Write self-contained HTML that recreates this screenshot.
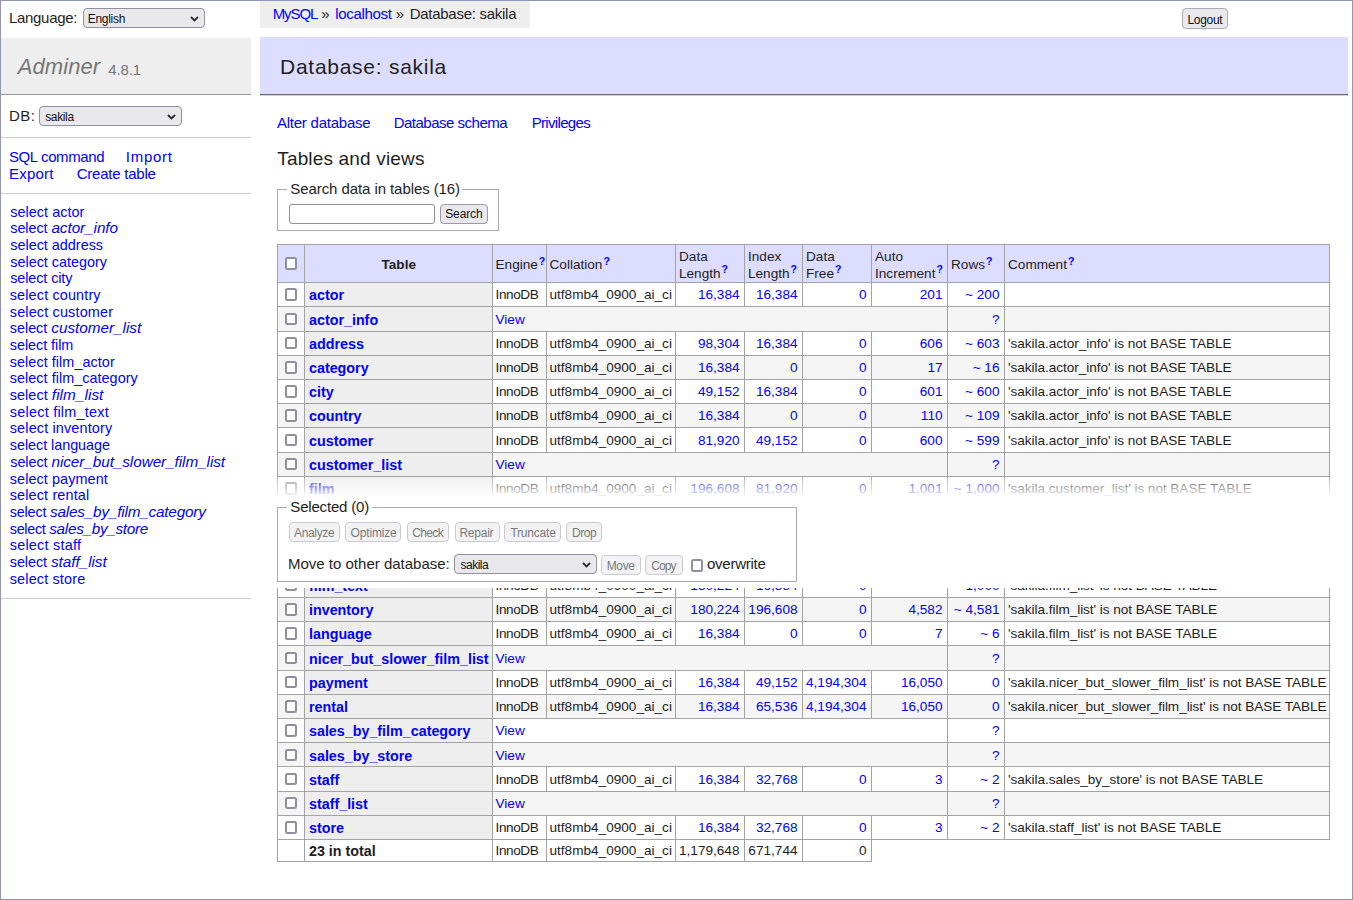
<!DOCTYPE html>
<html><head><meta charset="utf-8"><title>Database: sakila - Adminer</title>
<style>
html,body{margin:0;padding:0;background:#fff}
body{width:1353px;height:900px;overflow:hidden;position:relative;font-family:"Liberation Sans",sans-serif;color:#1e1e1e;font-size:15px;line-height:18px}
a{color:#00f;text-decoration:none}
.abs{position:absolute;white-space:nowrap}
.frame{position:absolute;left:0;top:0;width:1351px;height:898px;border:1px solid #9196b0;z-index:50;pointer-events:none}
.sel{position:absolute;box-sizing:border-box;background:#e9e9ed;border:1px solid #8f8f9d;border-radius:4px;font-size:12px;line-height:21px;color:#111;padding-left:7px}
.sel svg{position:absolute;right:5.5px;top:7px}
.btn{position:absolute;box-sizing:border-box;background:#e9e9ed;border:1px solid #9a9aa6;border-radius:4px;font-size:12px;line-height:19px;color:#111;text-align:center}
.btn.dis{color:#7a7a7a;background:#f3f3f5;border-color:#cacad2;font-size:12px;line-height:21px}
.cb{display:inline-block;box-sizing:border-box;width:12.5px;height:12.5px;border:2px solid #8f8f9d;border-radius:2.5px;background:#fff;vertical-align:middle;position:relative;top:-0.5px}
/* menu */
#h1{position:absolute;left:1px;top:38px;width:250px;height:55.5px;background:#eee;border-bottom:1px solid #999}
.hr{position:absolute;left:1px;width:250px;height:1px;background:#ccc}
#ver{font-size:15px;font-style:normal;vertical-align:-1px}
.li i{font-size:15.3px}
.li{font-size:14.4px;height:16.7px;line-height:16.7px;white-space:nowrap}
/* content */
#bc{position:absolute;left:260px;top:1px;width:270px;height:27px;background:#eee}
#h2{position:absolute;left:260px;top:37px;width:1088px;height:56.5px;background:#ddf;border-bottom:1px solid #6f6f78;box-shadow:0 1px 0 rgba(0,0,0,.18)}
/* table */
#tbl{position:absolute;left:277px;top:243.5px;border-collapse:collapse;table-layout:fixed;width:1053px;font-size:13.6px;line-height:16px}
#tbl td,#tbl th{border:1px solid #a3a3a3;padding:0 3px;white-space:nowrap;overflow:hidden;vertical-align:middle}
#tbl th{background:#eee;text-align:left;font-weight:bold;font-size:14.3px;padding-left:4px}
#tbl thead td,#tbl thead th{background:#ddf;font-weight:normal;line-height:17px;padding-top:3px}
#tbl thead th{text-align:center;font-weight:bold;font-size:13.6px}
#tbl tbody tr{height:24.23px}
#tbl tbody td,#tbl tbody th{padding-top:1.4px}
#tbl tr.odd td{background:#f5f5f5}
#tbl td.r{text-align:right;padding-right:4.5px}
#tbl td.e{letter-spacing:-0.4px}
#tbl td.cm{overflow:visible;letter-spacing:-0.05px}
#tbl td.c0{text-align:center;padding:0}
#tbl sup{color:#00f;font-size:10.5px;font-weight:bold;line-height:0;vertical-align:4.5px;margin-left:1px}
#tbl tr.tot td,#tbl tr.tot th{background:#fff}
#tbl tr.tot{height:21.9px}
/* footer */
#foot{position:absolute;left:261px;top:477.5px;width:1092px;height:110.5px;z-index:10}
#foot .grad{height:20px;background:linear-gradient(rgba(255,255,255,.2),#fff)}
#foot .wh{height:90.5px;background:#fff}
</style></head><body>
<div class="frame"></div>

<!-- left menu -->
<div class="abs" style="left:10px;top:9px"><span id="lang" style="letter-spacing:-0.312px;margin-left:-1.00px">Language:</span></div>
<div class="sel" style="left:83px;top:8px;width:122px;height:20px"><span id="langsel" style="letter-spacing:-0.267px;margin-left:-3.36px">English</span><svg width="9" height="6" viewBox="0 0 9 6"><path d="M1 1 L4.5 4.5 L8 1" fill="none" stroke="#2b2b2b" stroke-width="1.8"/></svg></div>

<div id="h1"></div>
<div class="abs" style="left:16px;top:53.8px;font-size:22px;line-height:26px;color:#777;font-style:italic"><span id="adm" style="letter-spacing:0.083px;margin-left:1.74px">Adminer</span> <span id="ver" style="letter-spacing:-0.125px;margin-left:1.84px">4.8.1</span></div>

<div class="abs" style="left:10px;top:107px"><span id="db" style="letter-spacing:0.500px;margin-left:-1.00px">DB:</span></div>
<div class="sel" style="left:39px;top:106px;width:143px;height:20px"><span id="dbsel" style="letter-spacing:-0.360px;margin-left:-1.80px">sakila</span><svg width="9" height="6" viewBox="0 0 9 6"><path d="M1 1 L4.5 4.5 L8 1" fill="none" stroke="#2b2b2b" stroke-width="1.8"/></svg></div>
<div class="hr" style="top:137px"></div>

<div class="abs" style="left:10px;top:148px"><a id="sql" style="letter-spacing:-0.400px;margin-left:-1.00px">SQL command</a></div>
<div class="abs" style="left:127px;top:148px"><a id="imp" style="letter-spacing:0.700px;margin-left:-1.18px">Import</a></div>
<div class="abs" style="left:10px;top:164.5px"><a id="exp" style="letter-spacing:0.200px;margin-left:-1.00px">Export</a></div>
<div class="abs" style="left:77px;top:164.5px"><a id="crt" style="letter-spacing:-0.227px;margin-left:-0.34px">Create table</a></div>
<div class="hr" style="top:193px"></div>

<div class="abs" style="left:10px;top:203.5px;color:#00f">
<div class="li"><span id="m0" style="letter-spacing:0.045px;margin-left:0.26px">select actor</span></div>
<div class="li"><span id="m1" style="letter-spacing:-0.062px;margin-left:0.26px">select <i>actor_info</i></span></div>
<div class="li"><span id="m2" style="letter-spacing:0.000px;margin-left:0.26px">select address</span></div>
<div class="li"><span id="m3" style="letter-spacing:0.000px;margin-left:0.26px">select category</span></div>
<div class="li"><span id="m4" style="letter-spacing:-0.100px;margin-left:0.26px">select city</span></div>
<div class="li"><span id="m5" style="letter-spacing:0.154px;margin-left:-0.24px">select country</span></div>
<div class="li"><span id="m6" style="letter-spacing:0.171px;margin-left:-0.24px">select customer</span></div>
<div class="li"><span id="m7" style="letter-spacing:-0.011px;margin-left:-0.24px">select <i>customer_list</i></span></div>
<div class="li"><span id="m8" style="letter-spacing:-0.040px;margin-left:-0.24px">select film</span></div>
<div class="li"><span id="m9" style="letter-spacing:0.062px;margin-left:-0.24px">select film_actor</span></div>
<div class="li"><span id="m10" style="letter-spacing:0.042px;margin-left:-0.24px">select film_category</span></div>
<div class="li"><span id="m11" style="letter-spacing:0.067px;margin-left:-0.24px">select <i>film_list</i></span></div>
<div class="li"><span id="m12" style="letter-spacing:0.253px;margin-left:-0.24px">select film_text</span></div>
<div class="li"><span id="m13" style="letter-spacing:0.160px;margin-left:-0.24px">select inventory</span></div>
<div class="li"><span id="m14" style="letter-spacing:-0.043px;margin-left:-0.24px">select language</span></div>
<div class="li"><span id="m15" style="letter-spacing:-0.059px;margin-left:0.26px">select <i>nicer_but_slower_film_list</i></span></div>
<div class="li"><span id="m16" style="letter-spacing:0.092px;margin-left:-0.24px">select payment</span></div>
<div class="li"><span id="m17" style="letter-spacing:0.150px;margin-left:-0.24px">select rental</span></div>
<div class="li"><span id="m18" style="letter-spacing:-0.193px;margin-left:-0.24px">select <i>sales_by_film_category</i></span></div>
<div class="li"><span id="m19" style="letter-spacing:-0.300px;margin-left:-0.24px">select <i>sales_by_store</i></span></div>
<div class="li"><span id="m20" style="letter-spacing:0.236px;margin-left:-0.24px">select staff</span></div>
<div class="li"><span id="m21" style="letter-spacing:-0.050px;margin-left:-0.24px">select <i>staff_list</i></span></div>
<div class="li"><span id="m22" style="letter-spacing:0.164px;margin-left:-0.24px">select store</span></div>
</div>
<div class="hr" style="top:598px"></div>

<!-- breadcrumb -->
<div id="bc"></div>
<div class="abs" style="left:274px;top:5px"><a id="bc1" style="letter-spacing:-1.125px;margin-left:-1.26px">MySQL</a> &raquo; <a id="bc2" style="letter-spacing:-0.312px;margin-left:1.34px">localhost</a> &raquo; <span id="bc3" style="letter-spacing:-0.267px;margin-left:1.40px">Database: sakila</span></div>
<div class="btn" style="left:1181.5px;top:7.5px;width:46px;height:21px;line-height:22px;border-color:#acacb6"><span id="logout" style="letter-spacing:-0.280px;margin-left:0.84px">Logout</span></div>

<div id="h2"></div>
<div class="abs" style="left:281px;top:54px;font-size:21px;line-height:26px"><span id="h2t" style="letter-spacing:0.733px;margin-left:-1.00px">Database: sakila</span></div>

<div class="abs" style="left:277px;top:114px"><a id="l1" style="letter-spacing:-0.231px;margin-left:-0.08px">Alter database</a></div>
<div class="abs" style="left:394px;top:114px"><a id="l2" style="letter-spacing:-0.500px;margin-left:-0.34px">Database schema</a></div>
<div class="abs" style="left:532px;top:114px"><a id="l3" style="letter-spacing:-0.667px;margin-left:-0.34px">Privileges</a></div>

<div class="abs" style="left:277px;top:148px;font-size:19px;line-height:22px"><span id="h3t" style="letter-spacing:0.167px;margin-left:0.24px">Tables and views</span></div>

<!-- search fieldset -->
<div class="abs" style="left:277px;top:189px;width:220px;height:41px;border:1px solid #ababab;border-top:none"></div>
<div class="abs" style="left:277px;top:189px;width:10px;height:1px;background:#ababab"></div>
<div class="abs" style="left:462px;top:189px;width:36px;height:1px;background:#ababab"></div>
<div class="abs" style="left:290px;top:180px"><span id="leg1" style="letter-spacing:-0.080px;margin-left:0.34px">Search data in tables (16)</span></div>
<div class="abs" style="left:289px;top:204px;width:146px;height:20px;box-sizing:border-box;border:1px solid #8f8f9d;border-radius:3px;background:#fff"></div>
<div class="btn" style="left:440px;top:204px;width:48px;height:20px"><span id="srch" style="letter-spacing:-0.120px;margin-left:-0.24px">Search</span></div>

<table id="tbl">
<colgroup><col style="width:27px"><col style="width:187.5px"><col style="width:54px"><col style="width:129.5px"><col style="width:69px"><col style="width:58px"><col style="width:69px"><col style="width:76px"><col style="width:57px"><col style="width:325px"></colgroup>
<thead><tr style="height:38.6px"><td class="c0"><span class="cb"></span></td><th>Table</th><td>Engine<sup>?</sup></td><td>Collation<sup>?</sup></td><td>Data<br>Length<sup>?</sup></td><td>Index<br>Length<sup>?</sup></td><td>Data<br>Free<sup>?</sup></td><td>Auto<br>Increment<sup>?</sup></td><td>Rows<sup>?</sup></td><td>Comment<sup>?</sup></td></tr></thead>
<tbody>
<tr><td class="c0"><span class="cb"></span></td><th><a>actor</a></th><td class="e">InnoDB</td><td>utf8mb4_0900_ai_ci</td><td class="r"><a>16,384</a></td><td class="r"><a>16,384</a></td><td class="r"><a>0</a></td><td class="r"><a>201</a></td><td class="r"><a>~ 200</a></td><td class="cm"></td></tr>
<tr class="odd"><td class="c0"><span class="cb"></span></td><th><a>actor_info</a></th><td colspan="6"><a class="v">View</a></td><td class="r"><a>?</a></td><td></td></tr>
<tr><td class="c0"><span class="cb"></span></td><th><a>address</a></th><td class="e">InnoDB</td><td>utf8mb4_0900_ai_ci</td><td class="r"><a>98,304</a></td><td class="r"><a>16,384</a></td><td class="r"><a>0</a></td><td class="r"><a>606</a></td><td class="r"><a>~ 603</a></td><td class="cm">'sakila.actor_info' is not BASE TABLE</td></tr>
<tr class="odd"><td class="c0"><span class="cb"></span></td><th><a>category</a></th><td class="e">InnoDB</td><td>utf8mb4_0900_ai_ci</td><td class="r"><a>16,384</a></td><td class="r"><a>0</a></td><td class="r"><a>0</a></td><td class="r"><a>17</a></td><td class="r"><a>~ 16</a></td><td class="cm">'sakila.actor_info' is not BASE TABLE</td></tr>
<tr><td class="c0"><span class="cb"></span></td><th><a>city</a></th><td class="e">InnoDB</td><td>utf8mb4_0900_ai_ci</td><td class="r"><a>49,152</a></td><td class="r"><a>16,384</a></td><td class="r"><a>0</a></td><td class="r"><a>601</a></td><td class="r"><a>~ 600</a></td><td class="cm">'sakila.actor_info' is not BASE TABLE</td></tr>
<tr class="odd"><td class="c0"><span class="cb"></span></td><th><a>country</a></th><td class="e">InnoDB</td><td>utf8mb4_0900_ai_ci</td><td class="r"><a>16,384</a></td><td class="r"><a>0</a></td><td class="r"><a>0</a></td><td class="r"><a>110</a></td><td class="r"><a>~ 109</a></td><td class="cm">'sakila.actor_info' is not BASE TABLE</td></tr>
<tr><td class="c0"><span class="cb"></span></td><th><a>customer</a></th><td class="e">InnoDB</td><td>utf8mb4_0900_ai_ci</td><td class="r"><a>81,920</a></td><td class="r"><a>49,152</a></td><td class="r"><a>0</a></td><td class="r"><a>600</a></td><td class="r"><a>~ 599</a></td><td class="cm">'sakila.actor_info' is not BASE TABLE</td></tr>
<tr class="odd"><td class="c0"><span class="cb"></span></td><th><a>customer_list</a></th><td colspan="6"><a class="v">View</a></td><td class="r"><a>?</a></td><td></td></tr>
<tr><td class="c0"><span class="cb"></span></td><th><a>film</a></th><td class="e">InnoDB</td><td>utf8mb4_0900_ai_ci</td><td class="r"><a>196,608</a></td><td class="r"><a>81,920</a></td><td class="r"><a>0</a></td><td class="r"><a>1,001</a></td><td class="r"><a>~ 1,000</a></td><td class="cm">'sakila.customer_list' is not BASE TABLE</td></tr>
<tr class="odd"><td class="c0"><span class="cb"></span></td><th><a>film_actor</a></th><td class="e">InnoDB</td><td>utf8mb4_0900_ai_ci</td><td class="r"><a>196,608</a></td><td class="r"><a>81,920</a></td><td class="r"><a>0</a></td><td class="r"></td><td class="r"><a>~ 5,462</a></td><td class="cm">'sakila.customer_list' is not BASE TABLE</td></tr>
<tr><td class="c0"><span class="cb"></span></td><th><a>film_category</a></th><td class="e">InnoDB</td><td>utf8mb4_0900_ai_ci</td><td class="r"><a>65,536</a></td><td class="r"><a>16,384</a></td><td class="r"><a>0</a></td><td class="r"></td><td class="r"><a>~ 1,000</a></td><td class="cm">'sakila.customer_list' is not BASE TABLE</td></tr>
<tr class="odd"><td class="c0"><span class="cb"></span></td><th><a>film_list</a></th><td colspan="6"><a class="v">View</a></td><td class="r"><a>?</a></td><td></td></tr>
<tr><td class="c0"><span class="cb"></span></td><th><a>film_text</a></th><td class="e">InnoDB</td><td>utf8mb4_0900_ai_ci</td><td class="r"><a>180,224</a></td><td class="r"><a>16,384</a></td><td class="r"><a>0</a></td><td class="r"></td><td class="r"><a>~ 1,000</a></td><td class="cm">'sakila.film_list' is not BASE TABLE</td></tr>
<tr class="odd"><td class="c0"><span class="cb"></span></td><th><a>inventory</a></th><td class="e">InnoDB</td><td>utf8mb4_0900_ai_ci</td><td class="r"><a>180,224</a></td><td class="r"><a>196,608</a></td><td class="r"><a>0</a></td><td class="r"><a>4,582</a></td><td class="r"><a>~ 4,581</a></td><td class="cm">'sakila.film_list' is not BASE TABLE</td></tr>
<tr><td class="c0"><span class="cb"></span></td><th><a>language</a></th><td class="e">InnoDB</td><td>utf8mb4_0900_ai_ci</td><td class="r"><a>16,384</a></td><td class="r"><a>0</a></td><td class="r"><a>0</a></td><td class="r"><a>7</a></td><td class="r"><a>~ 6</a></td><td class="cm">'sakila.film_list' is not BASE TABLE</td></tr>
<tr class="odd"><td class="c0"><span class="cb"></span></td><th><a>nicer_but_slower_film_list</a></th><td colspan="6"><a class="v">View</a></td><td class="r"><a>?</a></td><td></td></tr>
<tr><td class="c0"><span class="cb"></span></td><th><a>payment</a></th><td class="e">InnoDB</td><td>utf8mb4_0900_ai_ci</td><td class="r"><a>16,384</a></td><td class="r"><a>49,152</a></td><td class="r"><a>4,194,304</a></td><td class="r"><a>16,050</a></td><td class="r"><a>0</a></td><td class="cm">'sakila.nicer_but_slower_film_list' is not BASE TABLE</td></tr>
<tr class="odd"><td class="c0"><span class="cb"></span></td><th><a>rental</a></th><td class="e">InnoDB</td><td>utf8mb4_0900_ai_ci</td><td class="r"><a>16,384</a></td><td class="r"><a>65,536</a></td><td class="r"><a>4,194,304</a></td><td class="r"><a>16,050</a></td><td class="r"><a>0</a></td><td class="cm">'sakila.nicer_but_slower_film_list' is not BASE TABLE</td></tr>
<tr><td class="c0"><span class="cb"></span></td><th><a>sales_by_film_category</a></th><td colspan="6"><a class="v">View</a></td><td class="r"><a>?</a></td><td></td></tr>
<tr class="odd"><td class="c0"><span class="cb"></span></td><th><a>sales_by_store</a></th><td colspan="6"><a class="v">View</a></td><td class="r"><a>?</a></td><td></td></tr>
<tr><td class="c0"><span class="cb"></span></td><th><a>staff</a></th><td class="e">InnoDB</td><td>utf8mb4_0900_ai_ci</td><td class="r"><a>16,384</a></td><td class="r"><a>32,768</a></td><td class="r"><a>0</a></td><td class="r"><a>3</a></td><td class="r"><a>~ 2</a></td><td class="cm">'sakila.sales_by_store' is not BASE TABLE</td></tr>
<tr class="odd"><td class="c0"><span class="cb"></span></td><th><a>staff_list</a></th><td colspan="6"><a class="v">View</a></td><td class="r"><a>?</a></td><td></td></tr>
<tr><td class="c0"><span class="cb"></span></td><th><a>store</a></th><td class="e">InnoDB</td><td>utf8mb4_0900_ai_ci</td><td class="r"><a>16,384</a></td><td class="r"><a>32,768</a></td><td class="r"><a>0</a></td><td class="r"><a>3</a></td><td class="r"><a>~ 2</a></td><td class="cm">'sakila.staff_list' is not BASE TABLE</td></tr>
<tr class="tot"><td></td><th>23 in total</th><td class="e">InnoDB</td><td>utf8mb4_0900_ai_ci</td><td class="r">1,179,648</td><td class="r">671,744</td><td class="r">0</td></tr>
</tbody>
</table>

<!-- sticky footer -->
<div id="foot"><div class="grad"></div><div class="wh"></div></div>
<div class="abs" style="z-index:11;left:277px;top:507px;width:518px;height:74px;border:1px solid #ababab;border-top:none"></div>
<div class="abs" style="z-index:11;left:277px;top:507px;width:10px;height:1px;background:#ababab"></div>
<div class="abs" style="z-index:11;left:372px;top:507px;width:424px;height:1px;background:#ababab"></div>
<div class="abs" style="z-index:11;left:290px;top:498px"><span id="leg2" style="letter-spacing:-0.182px;margin-left:0.34px">Selected (0)</span></div>
<div class="btn dis" style="z-index:11;left:289px;top:522px;width:51px;height:20px"><span id="banalyze" style="letter-spacing:-0.367px;margin-left:-0.72px">Analyze</span></div>
<div class="btn dis" style="z-index:11;left:345px;top:522px;width:56px;height:20px"><span id="boptimize" style="letter-spacing:-0.171px;margin-left:1.20px">Optimize</span></div>
<div class="btn dis" style="z-index:11;left:407px;top:522px;width:42px;height:20px"><span id="bcheck" style="letter-spacing:-0.600px;margin-left:-0.72px">Check</span></div>
<div class="btn dis" style="z-index:11;left:455px;top:522px;width:45px;height:20px"><span id="brepair" style="letter-spacing:-0.240px;margin-left:-2.28px">Repair</span></div>
<div class="btn dis" style="z-index:11;left:504px;top:522px;width:57px;height:20px"><span id="btruncate" style="letter-spacing:-0.200px;margin-left:1.08px">Truncate</span></div>
<div class="btn dis" style="z-index:11;left:566px;top:522px;width:36px;height:20px"><span id="bdrop" style="letter-spacing:-0.400px;margin-left:0.36px">Drop</span></div>
<div class="abs" style="z-index:11;left:288px;top:555px"><span id="mv" style="letter-spacing:0.000px;margin-left:0.00px">Move to other database:</span></div>
<div class="sel" style="z-index:11;left:454px;top:554px;width:143px;height:20px"><span id="fsel" style="letter-spacing:-0.520px;margin-left:-1.44px">sakila</span><svg width="9" height="6" viewBox="0 0 9 6"><path d="M1 1 L4.5 4.5 L8 1" fill="none" stroke="#2b2b2b" stroke-width="1.8"/></svg></div>
<div class="btn dis" style="z-index:11;left:601px;top:555px;width:40px;height:20px"><span id="bmove" style="letter-spacing:-0.333px;margin-left:-0.72px">Move</span></div>
<div class="btn dis" style="z-index:11;left:645px;top:555px;width:38px;height:20px"><span id="bcopy" style="letter-spacing:-0.933px;margin-left:-1.08px">Copy</span></div>
<div class="abs" style="z-index:11;left:690.5px;top:556px"><span class="cb"></span></div>
<div class="abs" style="z-index:11;left:705px;top:555px"><span id="ow" style="letter-spacing:-0.250px;margin-left:2.00px">overwrite</span></div>

</body></html>
